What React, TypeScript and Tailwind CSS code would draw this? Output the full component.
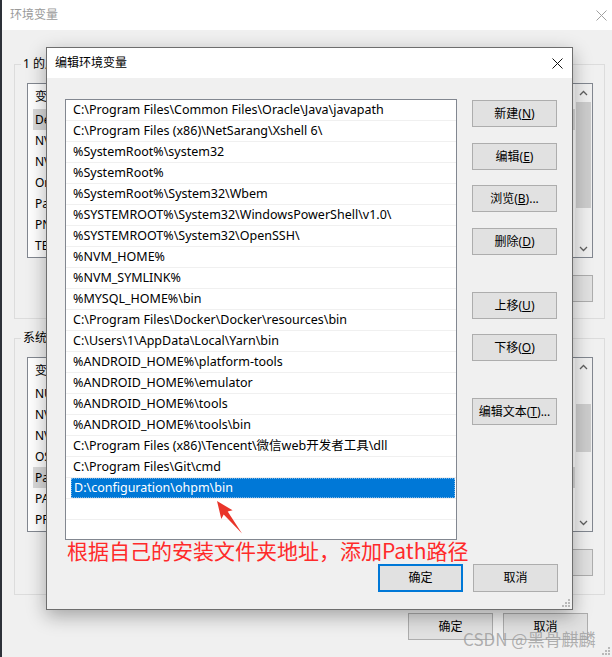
import React from "react";

const font = "font-['Noto_Sans','Noto_Sans_CJK_SC',sans-serif]";

const pathEntries = [
  "C:\\Program Files\\Common Files\\Oracle\\Java\\javapath",
  "C:\\Program Files (x86)\\NetSarang\\Xshell 6\\",
  "%SystemRoot%\\system32",
  "%SystemRoot%",
  "%SystemRoot%\\System32\\Wbem",
  "%SYSTEMROOT%\\System32\\WindowsPowerShell\\v1.0\\",
  "%SYSTEMROOT%\\System32\\OpenSSH\\",
  "%NVM_HOME%",
  "%NVM_SYMLINK%",
  "%MYSQL_HOME%\\bin",
  "C:\\Program Files\\Docker\\Docker\\resources\\bin",
  "C:\\Users\\1\\AppData\\Local\\Yarn\\bin",
  "%ANDROID_HOME%\\platform-tools",
  "%ANDROID_HOME%\\emulator",
  "%ANDROID_HOME%\\tools",
  "%ANDROID_HOME%\\tools\\bin",
  "C:\\Program Files (x86)\\Tencent\\微信web开发者工具\\dll",
  "C:\\Program Files\\Git\\cmd",
];

const userVars = ["DevEco Studio", "NVM_HOME", "NVM_SYMLINK", "OneDrive", "Path", "PNPM_HOME", "TEMP"];
const systemVars = ["NUMBER_OF_PROCESSORS", "NVM_HOME", "NVM_SYMLINK", "OS", "Path", "PATHEXT", "PROCESSOR_ARCHITECTURE"];

function CloseIcon({ color }: { color: string }) {
  return (
    <svg width="11" height="11" viewBox="0 0 11 11">
      <path d="M0.5 0.5 L10.5 10.5 M10.5 0.5 L0.5 10.5" stroke={color} strokeWidth="1" />
    </svg>
  );
}

function Grip() {
  return (
    <svg width="8" height="8" viewBox="0 0 8 8">
      <g fill="#b9b9b9">
        <rect x="6" y="0" width="2" height="2" />
        <rect x="3" y="3" width="2" height="2" />
        <rect x="6" y="3" width="2" height="2" />
        <rect x="0" y="6" width="2" height="2" />
        <rect x="3" y="6" width="2" height="2" />
        <rect x="6" y="6" width="2" height="2" />
      </g>
    </svg>
  );
}

function Btn({
  label,
  hot,
  rest = "",
  focused = false,
  className = "",
}: {
  label: string;
  hot?: string;
  rest?: string;
  focused?: boolean;
  className?: string;
}) {
  return (
    <div
      className={`w-[85px] h-[27px] flex items-center justify-center bg-[#e1e1e1] text-[12px] text-black ${
        focused ? "border-2 border-[#0078d7]" : "border border-[#adadad]"
      } ${className}`}
    >
      <span>
        {label}
        {hot && (
          <>
            (<u>{hot}</u>){rest}
          </>
        )}
      </span>
    </div>
  );
}

function ScrollBar({ thumbTop, thumbHeight }: { thumbTop: number; thumbHeight: number }) {
  return (
    <div className="w-[17px] h-full bg-[#f0f0f0] flex flex-col items-center">
      <div className="h-[17px] flex items-center justify-center">
        <svg width="9" height="6" viewBox="0 0 9 6">
          <path d="M1 5 L4.5 1.5 L8 5" stroke="#606060" strokeWidth="1.3" fill="none" />
        </svg>
      </div>
      <div className="flex-1 w-full relative">
        <div
          className="absolute left-[1px] right-[1px] bg-[#cdcdcd]"
          style={{ top: thumbTop, height: thumbHeight }}
        />
      </div>
      <div className="h-[17px] flex items-center justify-center">
        <svg width="9" height="6" viewBox="0 0 9 6">
          <path d="M1 1 L4.5 4.5 L8 1" stroke="#606060" strokeWidth="1.3" fill="none" />
        </svg>
      </div>
    </div>
  );
}

function VarList({
  rows,
  selected,
  thumbTop,
  thumbHeight,
}: {
  rows: string[];
  selected: number;
  thumbTop: number;
  thumbHeight: number;
}) {
  return (
    <div className="ml-[12px] w-[566px] h-[175px] border border-[#828790] bg-white flex">
      <div className="flex-1 flex flex-col overflow-hidden">
        <div className="h-[25px] flex items-center text-[12px] text-black pl-[7px] shrink-0">
          <span className="w-[160px]">变量</span>
          <span>值</span>
        </div>
        <div className="pl-[5px]">
          {rows.map((r, i) => (
            <div
              key={i}
              className={`h-[21px] flex items-center text-[12px] text-black pl-[2px] whitespace-nowrap ${
                i === selected ? "bg-[#d9d9d9]" : ""
              }`}
            >
              {r}
            </div>
          ))}
        </div>
      </div>
      <ScrollBar thumbTop={thumbTop} thumbHeight={thumbHeight} />
    </div>
  );
}

function GroupBox({
  title,
  hot,
  rows,
  selected,
  buttons,
  thumbTop,
  thumbHeight,
  className = "",
}: {
  title: string;
  hot: string;
  rows: string[];
  selected: number;
  buttons: [string, string, string][];
  thumbTop: number;
  thumbHeight: number;
  className?: string;
}) {
  return (
    <div className={`ml-[12px] w-[591px] border border-[#dcdcdc] ${className}`}>
      <span className="block w-fit -mt-[9px] ml-[6px] px-[2px] bg-[#f0f0f0] text-[12px] leading-[16px] text-black">
        {title}(<u>{hot}</u>)
      </span>
      <div className="mt-[11px]">
        <VarList rows={rows} selected={selected} thumbTop={thumbTop} thumbHeight={thumbHeight} />
      </div>
      <div className="mt-[17px] mr-[11px] flex justify-end gap-[10px]">
        {buttons.map(([l, h, r]) => (
          <Btn key={l} label={l} hot={h} rest={r} />
        ))}
      </div>
    </div>
  );
}

export default function App() {
  return (
    <div className={`relative w-[612px] h-[657px] overflow-hidden flex bg-[#f0f0f0] ${font}`}>
      {/* desktop edge */}
      <div className="w-[2px] h-full bg-[#2d3139]" />

      {/* background window: 环境变量 */}
      <div className="flex-1 flex flex-col">
        <div className="h-[30px] bg-white flex items-center justify-between pl-[8px] pr-[5px]">
          <span className="text-[12px] text-[#9a9a9a]">环境变量</span>
          <CloseIcon color="#a0a0a0" />
        </div>
        <div className="flex flex-col">
          <GroupBox
            className="mt-[34px] h-[255px]"
            title="1 的用户变量"
            hot="U"
            rows={userVars}
            selected={0}
            buttons={[
              ["新建", "N", "..."],
              ["编辑", "E", "..."],
              ["删除", "D", ""],
            ]}
            thumbTop={1}
            thumbHeight={106}
          />
          <GroupBox
            className="mt-[19px] h-[257px]"
            title="系统变量"
            hot="S"
            rows={systemVars}
            selected={4}
            buttons={[
              ["新建", "W", "..."],
              ["编辑", "I", "..."],
              ["删除", "L", ""],
            ]}
            thumbTop={29}
            thumbHeight={48}
          />
          <div className="mt-[18px] mr-[24px] flex justify-end gap-[10px]">
            <Btn label="确定" />
            <Btn label="取消" />
          </div>
        </div>
        <div className="absolute right-[2px] bottom-[2px]">
          <Grip />
        </div>
      </div>

      {/* foreground dialog: 编辑环境变量 */}
      <div className="absolute left-[46px] top-[47px] w-[527px] h-[563px] border border-[#6e6e6e] bg-[#f0f0f0] flex flex-col shadow-[0_6px_18px_rgba(0,0,0,0.32)]">
        <div className="h-[30px] bg-white flex items-center justify-between pl-[8px] pr-[9px] shrink-0">
          <span className="text-[12px] text-black">编辑环境变量</span>
          <CloseIcon color="#111111" />
        </div>
        <div className="flex pl-[18px] pt-[21px]">
          <div className="w-[392px] h-[441px] border border-[#828790] bg-white overflow-hidden">
            {pathEntries.map((p) => (
              <div
                key={p}
                className="h-[21px] border-b border-[#f0f0f0] flex items-center pl-[7px] pt-[1px] text-[12.5px] text-black whitespace-nowrap"
              >
                {p}
              </div>
            ))}
            <div className="h-[21px] border-b border-[#f0f0f0] pl-[5px] pr-[1px]">
              <div className="h-full bg-[#0078d7] border border-dotted border-[#7fb6e6] flex items-center pl-[2px] text-[12.5px] text-white whitespace-nowrap">
                D:\configuration\ohpm\bin
              </div>
            </div>
            <div className="h-[21px] border-b border-[#f0f0f0]" />
            <div className="h-[21px]" />
          </div>
          <div className="ml-[15px] flex flex-col">
            <Btn className="mt-[1px]" label="新建" hot="N" />
            <Btn className="mt-[16px]" label="编辑" hot="E" />
            <Btn className="mt-[15px]" label="浏览" hot="B" rest="..." />
            <Btn className="mt-[16px]" label="删除" hot="D" />
            <Btn className="mt-[37px]" label="上移" hot="U" />
            <Btn className="mt-[15px]" label="下移" hot="O" />
            <Btn className="mt-[37px]" label="编辑文本" hot="T" rest="..." />
          </div>
        </div>
        <div className="mt-[24px] pr-[14px] flex justify-end gap-[10px]">
          <Btn className="h-[28px]" label="确定" focused />
          <Btn className="h-[28px]" label="取消" />
        </div>
        <div className="absolute right-[2px] bottom-[2px]">
          <Grip />
        </div>
      </div>

      {/* annotation */}
      <svg className="absolute left-0 top-0 pointer-events-none" width="612" height="657">
        <polygon
          points="217,501 232.6,510.3 227.7,511.6 242,533.5 223.7,514.6 221.3,519"
          fill="#e9352a"
        />
      </svg>
      <div className="absolute left-[67px] top-[536px] text-[21px] leading-[28px] text-[#ff2a2a] font-['Noto_Sans_CJK_SC',sans-serif] whitespace-nowrap">
        根据自己的安装文件夹地址，添加Path路径
      </div>

      {/* watermark */}
      <div className="absolute left-[463px] top-[628px] text-[17px] leading-[22px] text-[#9c9c9c]/80 font-['Noto_Sans_CJK_SC',sans-serif] whitespace-nowrap">
        CSDN @黑骨麒麟
      </div>
    </div>
  );
}
